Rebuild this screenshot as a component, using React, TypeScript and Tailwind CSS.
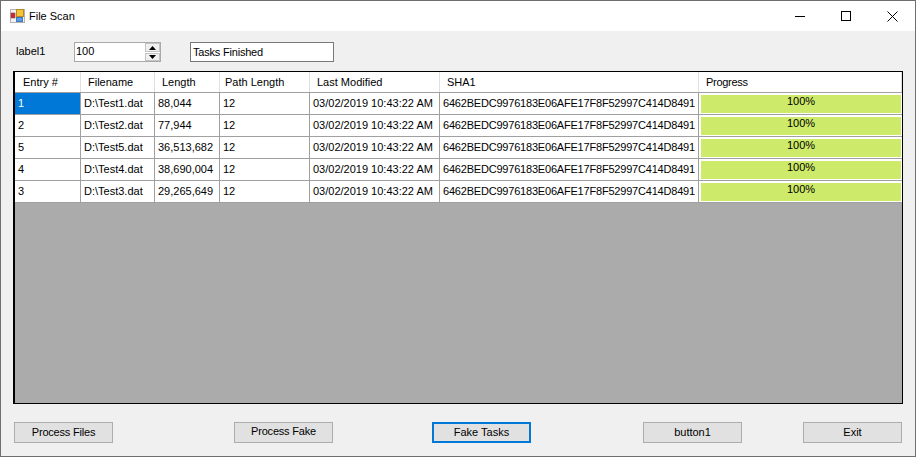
const columns = [
  { label: "Entry #", width: "w-[66px]", pad: "pl-[8px]" },
  { label: "Filename", width: "w-[74px]", pad: "pl-[7px]" },
  { label: "Length", width: "w-[65px]", pad: "pl-[7px]" },
  { label: "Path Length", width: "w-[90px]", pad: "pl-[5px]" },
  { label: "Last Modified", width: "w-[130px]", pad: "pl-[7px]" },
  { label: "SHA1", width: "w-[259px]", pad: "pl-[7px]" },
  { label: "Progress", width: "w-[203px]", pad: "pl-[7px] tracking-[-0.3px]" },
];

const rows = [
  { id: "1", file: "D:\\Test1.dat", length: "88,044" },
  { id: "2", file: "D:\\Test2.dat", length: "77,944" },
  { id: "5", file: "D:\\Test5.dat", length: "36,513,682" },
  { id: "4", file: "D:\\Test4.dat", length: "38,690,004" },
  { id: "3", file: "D:\\Test3.dat", length: "29,265,649" },
];

const cell = "h-[22px] shrink-0 border-r border-b border-[#a0a0a0] pl-[3px] flex items-center overflow-hidden whitespace-nowrap";

function AppIcon() {
  return (
    <svg width="16" height="16" viewBox="0 0 16 16" className="shrink-0">
      <rect x="0.5" y="1.5" width="14" height="13" fill="#f2f2f2" stroke="#b4b4b4" />
      <rect x="1" y="5" width="4" height="5" fill="#c8282a" stroke="#8f4a4a" strokeWidth="0.6" />
      <rect x="6.5" y="1.5" width="7" height="7" fill="#f3c53c" stroke="#b98a20" />
      <rect x="6.5" y="9.5" width="6" height="4" fill="#5c9be6" stroke="#3d78c0" />
    </svg>
  );
}

function Btn({ label, focused, className = "" }: { label: string; focused?: boolean; className?: string }) {
  return (
    <button
      type="button"
      className={`w-[99px] h-[21px] shrink-0 bg-[#e1e1e1] text-[11px] text-black leading-none ${
        focused ? "border-2 border-[#0078d7]" : "border border-[#adadad]"
      } ${className}`}
    >
      {label}
    </button>
  );
}

export default function App() {
  return (
    <div className="w-[916px] h-[457px] bg-[#f0f0f0] border border-[#6e6e6e] flex flex-col overflow-hidden text-[11px] text-black font-['Liberation_Sans',sans-serif]">
      {/* Title bar */}
      <div className="h-[30px] shrink-0 bg-white flex items-center pl-[9px]">
        <AppIcon />
        <span className="ml-[3px] text-[11px]">File Scan</span>
        <div className="ml-auto flex items-center">
          <div className="w-[46px] h-[30px] flex items-center justify-center">
            <svg width="10" height="10" viewBox="0 0 10 10"><path d="M0 5.5H10" stroke="#000" /></svg>
          </div>
          <div className="w-[46px] h-[30px] flex items-center justify-center">
            <svg width="10" height="10" viewBox="0 0 10 10"><rect x="0.5" y="0.5" width="9" height="9" fill="none" stroke="#000" /></svg>
          </div>
          <div className="w-[46px] h-[30px] flex items-center justify-center">
            <svg width="11" height="11" viewBox="0 0 11 11"><path d="M0.5 0.5L10.5 10.5M10.5 0.5L0.5 10.5" stroke="#000" /></svg>
          </div>
        </div>
      </div>

      {/* Top controls */}
      <div className="h-[40px] shrink-0 flex items-start pt-[11px] pl-[15px]">
        <span className="w-[58px] h-[19px] leading-[19px]">label1</span>
        <div className="w-[87px] h-[20px] bg-white border border-[#a9a9a9] flex items-center justify-between pl-[1px]">
          <span className="leading-none -mt-[2px]">100</span>
          <div className="w-[15px] h-[18px] flex flex-col gap-px">
            <div className="h-[9px] bg-[#f0f0f0] border border-[#c4c4c4] flex items-center justify-center">
              <svg width="7" height="4" viewBox="0 0 7 4"><path d="M3.5 0L7 4H0Z" fill="#000" /></svg>
            </div>
            <div className="h-[8px] bg-[#f0f0f0] border border-[#c4c4c4] flex items-center justify-center">
              <svg width="7" height="4" viewBox="0 0 7 4"><path d="M0 0H7L3.5 4Z" fill="#000" /></svg>
            </div>
          </div>
        </div>
        <div className="w-[144px] h-[20px] ml-[29px] bg-white border border-[#7a7a7a] flex items-center pl-[2px] tracking-[-0.2px]">
          Tasks Finished
        </div>
      </div>

      {/* Data grid */}
      <div className="w-[890px] h-[333px] ml-[12px] shrink-0 border border-l-2 border-black bg-[#ababab] overflow-hidden">
        <div className="flex h-[21px] bg-white border-b border-[#a0a0a0]">
          {columns.map((c) => (
            <div
              key={c.label}
              className={`${c.width} ${c.pad} shrink-0 h-[20px] border-r border-[#e0e0e0] flex items-center whitespace-nowrap`}
            >
              {c.label}
            </div>
          ))}
        </div>
        {rows.map((r, i) => (
          <div key={r.id} className="flex h-[22px] bg-white">
            <div className={`${cell} w-[66px] ${i === 0 ? "bg-[#0078d7] text-white" : ""}`}>{r.id}</div>
            <div className={`${cell} w-[74px]`}>{r.file}</div>
            <div className={`${cell} w-[65px]`}>{r.length}</div>
            <div className={`${cell} w-[90px]`}>12</div>
            <div className={`${cell} w-[130px]`}>03/02/2019 10:43:22 AM</div>
            <div className={`${cell} w-[259px] tracking-[-0.2px]`}>6462BEDC9976183E06AFE17F8F52997C414D8491</div>
            <div className="w-[203px] h-[22px] shrink-0 border-b border-[#a0a0a0] pt-[2px] pl-[2px] pr-px">
              <div className="h-[18px] bg-[#cdea6a] text-center leading-[12px]">100%</div>
            </div>
          </div>
        ))}
      </div>

      {/* Bottom buttons */}
      <div className="flex pl-[13px] mt-[18px]">
        <Btn label="Process Files" className="tracking-[-0.2px]" />
        <Btn label="Process Fake" className="ml-[121px] pb-[2px] tracking-[-0.2px]" />
        <Btn label="Fake Tasks" focused className="ml-[99px]" />
        <Btn label="button1" className="ml-[112px]" />
        <Btn label="Exit" className="ml-[61px]" />
      </div>
    </div>
  );
}
